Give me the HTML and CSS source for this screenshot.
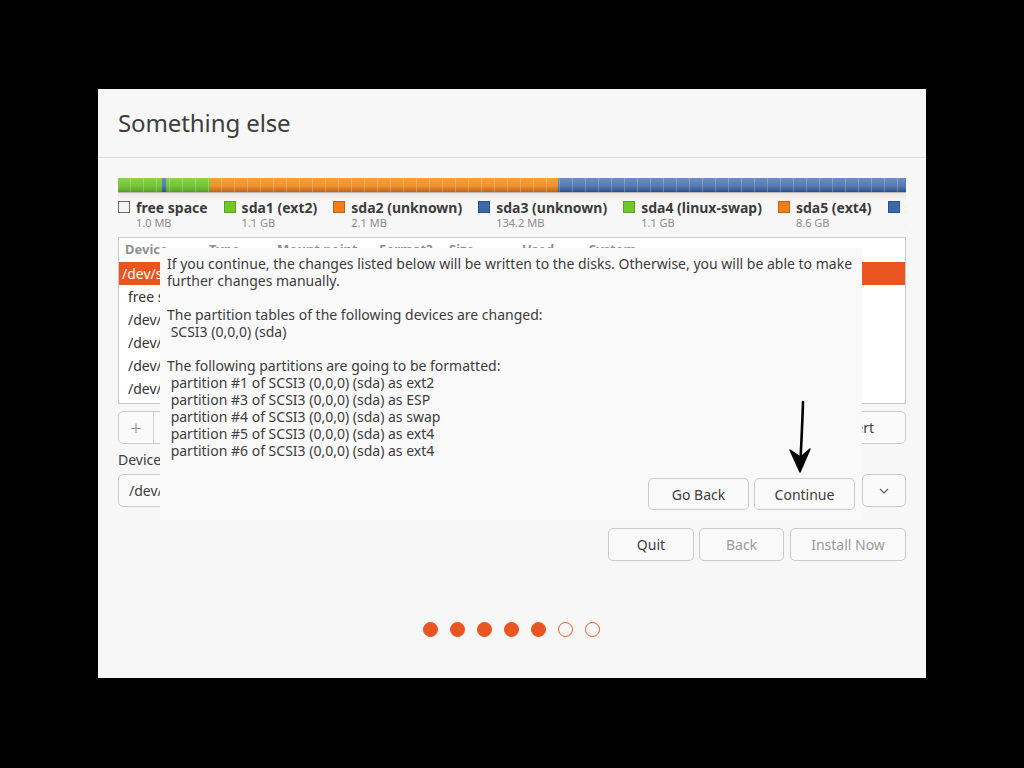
FILE: index.html
```html
<!DOCTYPE html>
<html>
<head>
<meta charset="utf-8">
<link rel="stylesheet" href="styles.css">
</head>
<body>
<div class="screen">
  <div class="panel">
    <header class="head"><h1 class="title">Something else</h1></header>
    <div class="content">
      <div class="pbar">
        <div class="seg green s1"></div>
        <div class="seg blue s2"></div>
        <div class="seg green s3"></div>
        <div class="seg orange s4"></div>
        <div class="seg blue s5"></div>
      </div>
      <div class="legend">
        <div class="litem"><span class="sw sw-free"></span><div><div class="lname">free space</div><div class="lsize">1.0 MB</div></div></div>
        <div class="litem"><span class="sw sw-green"></span><div><div class="lname">sda1 (ext2)</div><div class="lsize">1.1 GB</div></div></div>
        <div class="litem"><span class="sw sw-orange"></span><div><div class="lname">sda2 (unknown)</div><div class="lsize">2.1 MB</div></div></div>
        <div class="litem"><span class="sw sw-blue"></span><div><div class="lname">sda3 (unknown)</div><div class="lsize">134.2 MB</div></div></div>
        <div class="litem"><span class="sw sw-green"></span><div><div class="lname">sda4 (linux-swap)</div><div class="lsize">1.1 GB</div></div></div>
        <div class="litem"><span class="sw sw-orange"></span><div><div class="lname">sda5 (ext4)</div><div class="lsize">8.6 GB</div></div></div>
        <div class="litem"><span class="sw sw-blue"></span><div><div class="lname">sda6 (ext4)</div><div class="lsize">8.6 GB</div></div></div>
      </div>
      <div class="table">
        <div class="thead">
          <span class="c c-dev">Device</span><span class="c c-type">Type</span><span class="c c-mount">Mount point</span><span class="c c-fmt">Format?</span><span class="c c-size">Size</span><span class="c c-used">Used</span><span class="c c-sys">System</span>
        </div>
        <div class="row sel"><span class="c c-dev top">/dev/sda</span></div>
        <div class="row"><span class="c c-dev child">free space</span></div>
        <div class="row"><span class="c c-dev child">/dev/sda1</span></div>
        <div class="row"><span class="c c-dev child">/dev/sda2</span></div>
        <div class="row"><span class="c c-dev child">/dev/sda3</span></div>
        <div class="row"><span class="c c-dev child">/dev/sda4</span></div>
      </div>
      <div class="tools">
        <div class="pm">
          <button class="pmb">+</button><button class="pmb">−</button><button class="pmb">Change…</button>
        </div>
        <button class="btn revert">Revert</button>
      </div>
      <div class="blabel">Device for boot loader installation:</div>
      <div class="bootrow">
        <div class="combo">/dev/sda VMware, VMware Virtual S (21.5 GB)</div>
        <button class="btn drop"><svg width="12" height="8" viewBox="0 0 12 8"><path d="M2 2 L6 6 L10 2" fill="none" stroke="#5a5a5a" stroke-width="1.1"/></svg></button>
      </div>
      <div class="actions">
        <button class="btn quit">Quit</button>
        <button class="btn back" disabled>Back</button>
        <button class="btn install" disabled>Install Now</button>
      </div>
      <div class="dots">
        <span class="dot on"></span><span class="dot on"></span><span class="dot on"></span><span class="dot on"></span><span class="dot on"></span><span class="dot"></span><span class="dot"></span>
      </div>
    </div>

    <div class="dialog">
      <div class="dtext">
        <p>If you continue, the changes listed below will be written to the disks. Otherwise, you will be able to make further changes manually.</p>
        <p>The partition tables of the following devices are changed:<br>&nbsp;SCSI3 (0,0,0) (sda)</p>
        <p>The following partitions are going to be formatted:<br>&nbsp;partition #1 of SCSI3 (0,0,0) (sda) as ext2<br>&nbsp;partition #3 of SCSI3 (0,0,0) (sda) as ESP<br>&nbsp;partition #4 of SCSI3 (0,0,0) (sda) as swap<br>&nbsp;partition #5 of SCSI3 (0,0,0) (sda) as ext4<br>&nbsp;partition #6 of SCSI3 (0,0,0) (sda) as ext4</p>
      </div>
      <div class="dbuttons">
        <button class="btn dbtn">Go Back</button>
        <button class="btn dbtn">Continue</button>
      </div>
    </div>

    <svg class="arrow" width="30" height="76" viewBox="0 0 30 76">
      <path d="M17 2 C16.5 20 15.5 40 14.5 60" fill="none" stroke="#000" stroke-width="2.6" stroke-linecap="round"/>
      <path d="M4 50 L14 72 L24 49 L14.5 57 Z" fill="#000" stroke="#000" stroke-width="1.5" stroke-linejoin="round"/>
    </svg>
  </div>
</div>
</body>
</html>
```

FILE: styles.css
```css
* { box-sizing: border-box; }
html, body { margin: 0; padding: 0; }
body {
  background: #000;
  font-family: "Noto Sans", "DejaVu Sans", sans-serif;
  color: #3c3c3c;
}
.screen {
  width: 1024px;
  height: 768px;
  display: flex;
  align-items: flex-start;
  justify-content: center;
  padding-top: 89px;
}
.panel {
  position: relative;
  width: 828px;
  height: 589px;
  background: #f7f7f7;
  overflow: hidden;
}
.head {
  height: 69px;
  border-bottom: 1px solid #dcdcdc;
  padding: 18px 20px 0;
}
.title {
  margin: 0;
  font-size: 24px;
  font-weight: 400;
  line-height: 32px;
  color: #3d3d3d;
  letter-spacing: -0.1px;
}
.content {
  padding: 20px 20px 0;
}
.pbar {
  display: flex;
  height: 14px;
  position: relative;
  box-shadow: 0 1px 0 rgba(0,0,0,0.25);
}
.pbar::after {
  content: "";
  position: absolute;
  left: 0; right: 0; top: 0; bottom: 0;
  background: repeating-linear-gradient(90deg, transparent 0, transparent 12px, rgba(255,255,255,0.22) 12px, rgba(255,255,255,0.22) 13px);
}
.pbar::before {
  content: "";
  position: absolute;
  left: 0; right: 0; top: 15px; height: 8px;
  background: linear-gradient(180deg, rgba(200,160,120,0.18), rgba(247,247,247,0));
}
.seg { height: 14px; }
.green { background: linear-gradient(180deg, #8bd14a 0%, #74c43a 60%, #5a9c2a 100%); }
.orange { background: linear-gradient(180deg, #f6a141 0%, #ee8f2e 60%, #b8641a 100%); }
.blue { background: linear-gradient(180deg, #6a8ec4 0%, #5478b0 60%, #2e4f86 100%); }
.s1 { width: 44px; }
.s2 { width: 4px; }
.s3 { width: 44px; }
.s4 { width: 348px; }
.s5 { width: 348px; }

.legend {
  display: flex;
  gap: 16px;
  margin-top: 7px;
  height: 31px;
  overflow: hidden;
  white-space: nowrap;
}
.litem { display: flex; gap: 6px; flex: none; }
.sw {
  width: 12px; height: 12px;
  margin-top: 2px;
  flex: none;
  border: 1px solid rgba(0,0,0,0.35);
}
.sw-free { background: #f4f4f4; border-color: #6a6a6a; }
.sw-green { background: #72c72a; border-color: #5aa120; }
.sw-orange { background: #f07f1a; border-color: #c8620c; }
.sw-blue { background: #3a68a8; border-color: #2c5088; }
.lname { font-size: 14px; font-weight: 700; line-height: 17px; color: #3c3c3c; }
.lsize { font-size: 11px; line-height: 14px; color: #8c8c8c; }

.table {
  margin-top: 7px;
  height: 167px;
  border: 1px solid #c9c9c9;
  background: #fff;
  font-size: 14px;
}
.thead {
  position: relative;
  height: 24px;
  color: #8e8e8e;
  font-weight: 700;
  font-size: 13px;
  line-height: 22px;
}
.row {
  position: relative;
  height: 23px;
  line-height: 23px;
  color: #333;
}
.row.sel { background: #e95420; color: #fff; }
.c { position: absolute; top: 0; white-space: nowrap; }
.c-dev { left: 6px; }
.c-dev.top { left: 3px; }
.c-dev.child { left: 9px; }
.c-type { left: 90px; }
.c-mount { left: 158px; }
.c-fmt { left: 260px; }
.c-size { left: 330px; }
.c-used { left: 403px; }
.c-sys { left: 470px; }

.tools {
  margin-top: 7px;
  display: flex;
  justify-content: space-between;
  height: 33px;
}
.pm {
  display: flex;
  border: 1px solid #cbcbcb;
  border-radius: 5px;
  background: #fafafa;
  overflow: hidden;
}
.pmb {
  font-family: inherit;
  font-size: 20px;
  font-weight: 300;
  color: #8a8a8a;
  background: transparent;
  border: 0;
  border-right: 1px solid #d2d2d2;
  width: 35px;
  padding: 0;
}
.pmb:last-child { width: 90px; font-size: 14px; border-right: 0; color: #3c3c3c; }

.btn {
  font-family: inherit;
  font-size: 14px;
  color: #3c3c3c;
  background: #fafafa;
  border: 1px solid #cbcbcb;
  border-radius: 5px;
  height: 33px;
  padding: 0;
}
.btn:disabled { color: #9a9a9a; }
.revert { width: 106px; }

.blabel {
  margin-top: 7px;
  font-size: 14px;
  line-height: 17px;
}
.bootrow {
  margin-top: 6px;
  display: flex;
  justify-content: space-between;
  height: 33px;
}
.combo {
  width: 738px;
  height: 33px;
  border: 1px solid #cbcbcb;
  border-radius: 5px;
  background: #fafafa;
  font-size: 14px;
  line-height: 31px;
  padding-left: 10px;
}
.drop { width: 44px; display: flex; align-items: center; justify-content: center; }

.actions {
  margin-top: 21px;
  display: flex;
  justify-content: flex-end;
  gap: 5px;
}
.quit { width: 86px; }
.back { width: 85px; margin-right: 1px; }
.install { width: 116px; }

.dots {
  margin-top: 61px;
  display: flex;
  justify-content: center;
  gap: 12px;
  padding-right: 2px;
}
.dot {
  width: 15px; height: 15px;
  border-radius: 50%;
  border: 1.3px solid #e95420;
  background: #f7f7f7;
}
.dot.on { background: #e95420; }

.dialog {
  position: absolute;
  left: 62px;
  top: 159px;
  width: 702px;
  height: 272px;
  background: #f9f9f9;
  padding: 7px 7px 0 7px;
}
.dtext {
  font-size: 14px;
  line-height: 17px;
  color: #3c3c3c;
  height: 223px;
}
.dtext p { margin: 0 0 17px; }
.dbuttons {
  display: flex;
  justify-content: flex-end;
  gap: 5px;
}
.dbtn { width: 101px; height: 32px; }

.arrow {
  position: absolute;
  left: 688px;
  top: 311px;
}
```
